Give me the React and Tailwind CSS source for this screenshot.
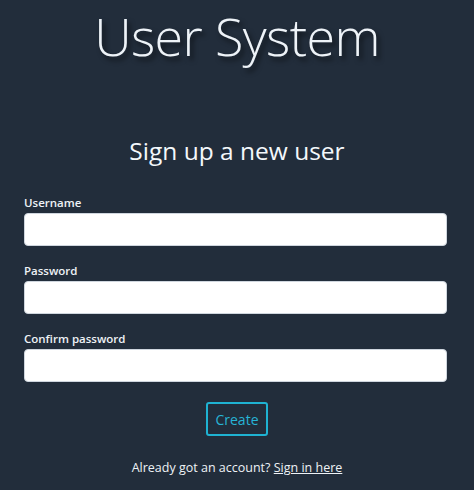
export default function App() {
  const fields = [
    { label: "Username", type: "text" },
    { label: "Password", type: "password" },
    { label: "Confirm password", type: "password" },
  ];

  return (
    <div className="min-h-[490px] w-full bg-[#222d3b] text-white font-['Open_Sans',sans-serif]">
      <h1 className="text-center text-[52px] font-light leading-[72px] tracking-[-0.6px] text-[#eef3f8] [text-shadow:3px_4px_5px_rgba(0,0,0,0.55)]">
        User System
      </h1>

      <h2 className="mt-[62px] text-center text-[24.5px] leading-[34px] text-[#f4f8fb]">
        Sign up a new user
      </h2>

      <form className="mt-[27px] flex flex-col gap-[17px] pl-6 pr-[27px]">
        {fields.map((f) => (
          <div key={f.label} className="flex flex-col">
            <label className="mb-[2px] text-[11.5px] font-semibold leading-[16px] text-[#eef2f6]">
              {f.label}
            </label>
            <input
              type={f.type}
              className="h-[33px] w-full rounded-[4px] border border-[#cfd6de] bg-white px-2 text-sm text-black outline-none"
            />
          </div>
        ))}

        <div className="mt-[3px] flex justify-center pl-[3px]">
          <button
            type="button"
            className="h-[34px] w-[62px] rounded-[3px] border-2 border-[#1fb2d2] text-[14px] text-[#27b4d6]"
          >
            Create
          </button>
        </div>
      </form>

      <p className="mt-[23px] text-center text-[12.5px] leading-[18px] text-[#eef2f6]">
        Already got an account?{" "}
        <a href="#" className="underline">
          Sign in here
        </a>
      </p>
    </div>
  );
}
